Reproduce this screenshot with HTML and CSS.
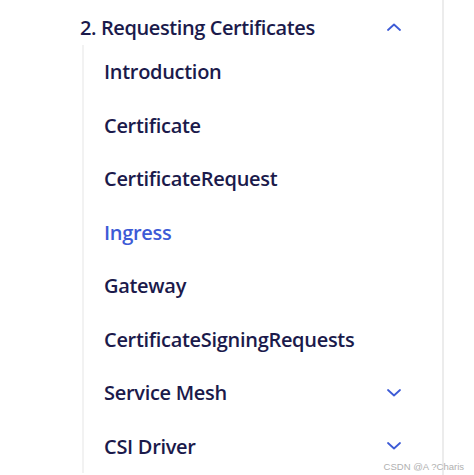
FILE: index.html
```html
<!DOCTYPE html>
<html>
<head>
<meta charset="utf-8">
<link rel="stylesheet" href="styles.css">
</head>
<body>
<div class="sidebar">
  <div class="section">
    <div class="head">
      <span class="head-title">2. Requesting Certificates</span>
      <svg class="chev" width="14" height="8" viewBox="0 0 14 8"><path d="M1 7L7 1.5L13 7" fill="none" stroke="#3d5bd6" stroke-width="1.8" stroke-linecap="round" stroke-linejoin="round"/></svg>
    </div>
    <ul class="sub">
      <li class="item">Introduction</li>
      <li class="item">Certificate</li>
      <li class="item">CertificateRequest</li>
      <li class="item active">Ingress</li>
      <li class="item">Gateway</li>
      <li class="item">CertificateSigningRequests</li>
      <li class="item"><span>Service Mesh</span>
        <svg class="chev" width="14" height="8" viewBox="0 0 14 8"><path d="M1 1L7 6.5L13 1" fill="none" stroke="#3d5bd6" stroke-width="1.8" stroke-linecap="round" stroke-linejoin="round"/></svg></li>
      <li class="item"><span>CSI Driver</span>
        <svg class="chev" width="14" height="8" viewBox="0 0 14 8"><path d="M1 1L7 6.5L13 1" fill="none" stroke="#3d5bd6" stroke-width="1.8" stroke-linecap="round" stroke-linejoin="round"/></svg></li>
    </ul>
  </div>
</div>
<div class="watermark">CSDN @A ?Charis</div>
</body>
</html>
```
FILE: styles.css
```css
html, body {
  margin: 0;
  padding: 0;
  background: #ffffff;
  height: 475px;
  overflow: hidden;
}
body {
  font-family: "Open Sans", "Liberation Sans", sans-serif;
  color: #1b1a4b;
  position: relative;
}
.sidebar {
  width: 442px;
  height: 475px;
  border-right: 2px solid #ececec;
  box-sizing: content-box;
}
.section {
  padding-left: 80px;
  padding-right: 41px;
}
.head {
  height: 45px;
  display: flex;
  align-items: center;
  justify-content: space-between;
  padding-top: 9px;
  box-sizing: border-box;
}
.head-title {
  font-size: 20px;
  font-weight: 600;
  letter-spacing: -0.4px;
}
.chev {
  display: block;
}
.sub {
  list-style: none;
  margin: 0 0 0 2px;
  padding: 0 0 0 20px;
  border-left: 2px solid #f2f2f2;
}
.item {
  height: 53.5px;
  display: flex;
  align-items: center;
  justify-content: space-between;
  font-size: 20px;
  font-weight: 600;
  letter-spacing: -0.3px;
}
.item.active {
  color: #3d5bd6;
}
.watermark {
  position: absolute;
  right: 10px;
  bottom: 3px;
  font-family: "Liberation Sans", Arial, sans-serif;
  font-size: 9.5px;
  color: #b0b0b0;
}
```
